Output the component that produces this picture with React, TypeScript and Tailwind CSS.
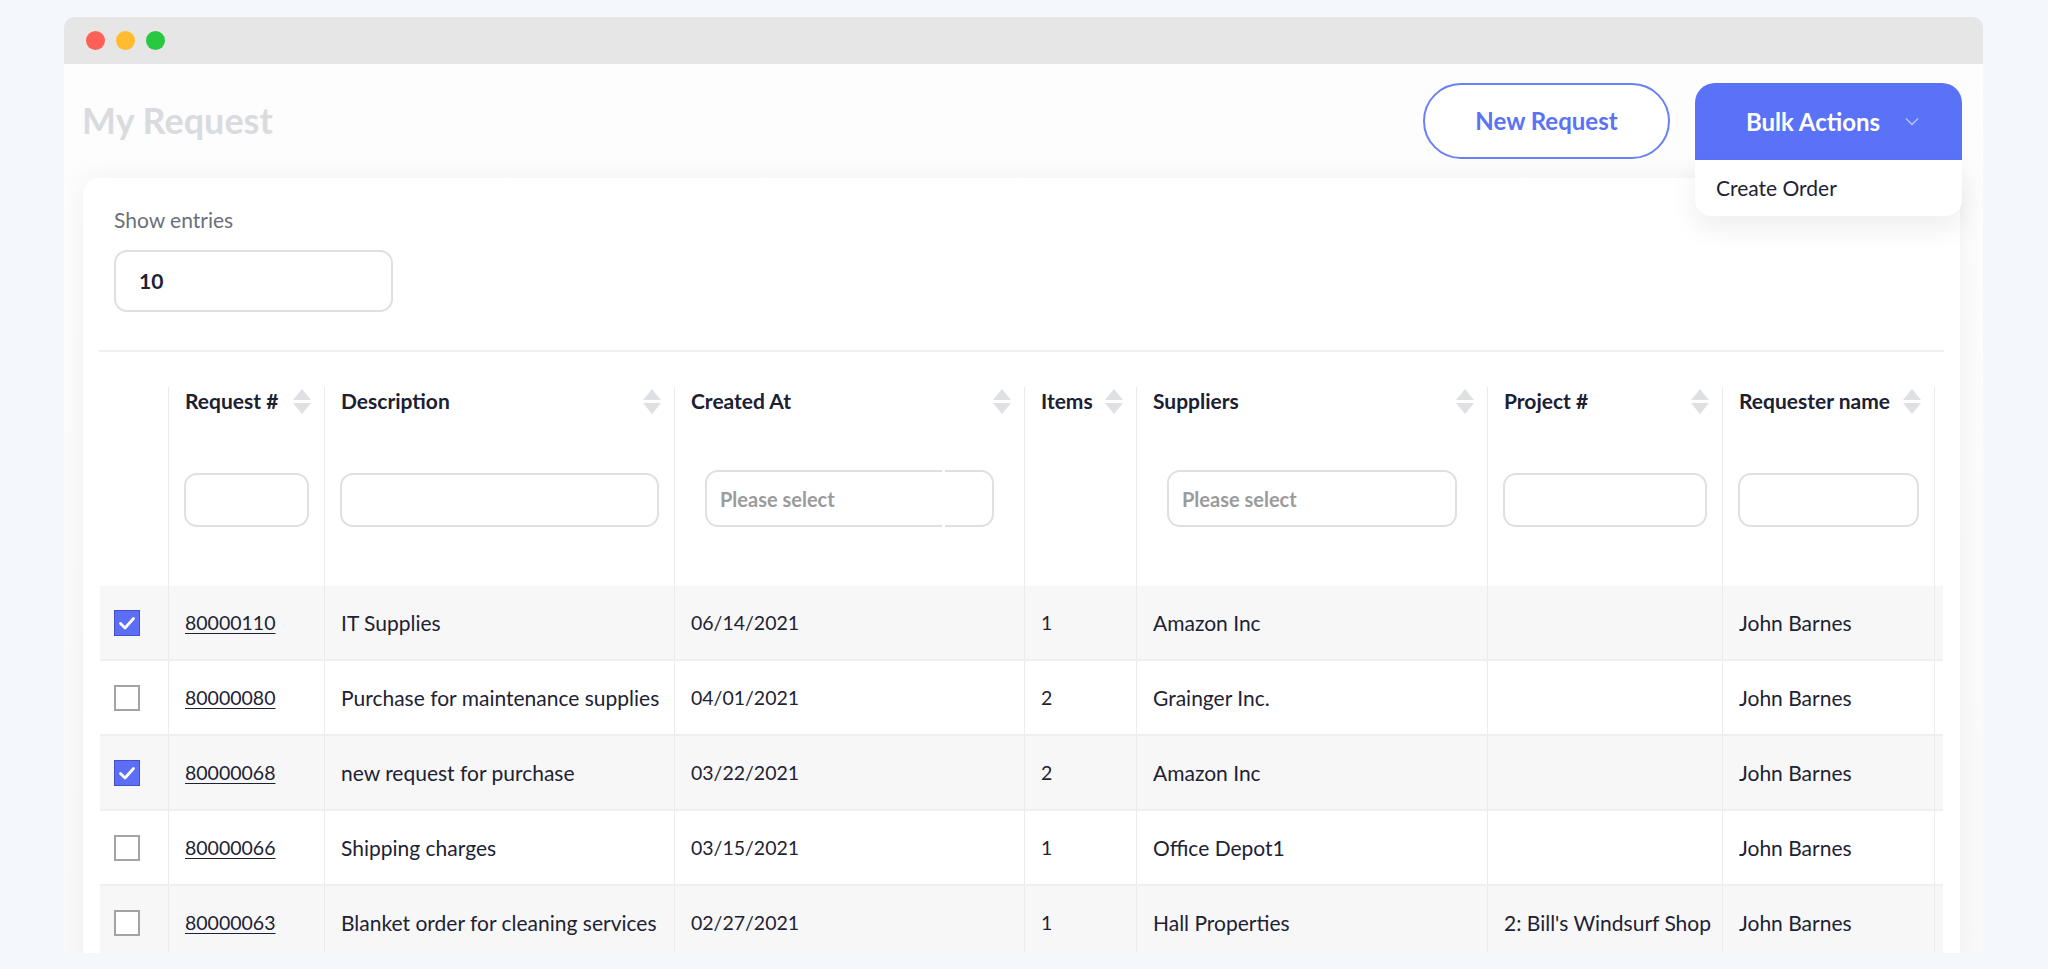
import React from "react";

const FONT = { fontFamily: "Lato, 'Open Sans', 'Noto Sans', sans-serif" };

const SortIcon = () => (
  <svg width="18" height="25" viewBox="0 0 18 25" className="shrink-0">
    <path d="M9 0 L18 11 L0 11 Z" fill="#dfe0e4" />
    <path d="M0 14 L18 14 L9 25 Z" fill="#dfe0e4" />
  </svg>
);

const Checkbox = ({ checked }: { checked: boolean }) =>
  checked ? (
    <div className="w-[26px] h-[26px] bg-[#5b6ef5] border border-[#4152c8] flex items-center justify-center">
      <svg width="20" height="20" viewBox="0 0 20 20">
        <path d="M3.5 10.5 L8 15 L16.5 5.5" fill="none" stroke="#ffffff" strokeWidth="2.8" strokeLinecap="round" strokeLinejoin="round" />
      </svg>
    </div>
  ) : (
    <div className="w-[26px] h-[26px] bg-white border-2 border-[#a3a3a6]" />
  );

type Col = { title?: string; filter?: "text" | "select" | null; gap?: boolean };

const cols: Col[] = [
  {},
  { title: "Request #", filter: "text" },
  { title: "Description", filter: "text" },
  { title: "Created At", filter: "select", gap: true },
  { title: "Items", filter: null },
  { title: "Suppliers", filter: "select" },
  { title: "Project #", filter: "text" },
  { title: "Requester name", filter: "text" },
  {},
];

const rows = [
  { c: true, id: "80000110", d: "IT Supplies", at: "06/14/2021", n: "1", s: "Amazon Inc", p: "", r: "John Barnes" },
  { c: false, id: "80000080", d: "Purchase for maintenance supplies", at: "04/01/2021", n: "2", s: "Grainger Inc.", p: "", r: "John Barnes" },
  { c: true, id: "80000068", d: "new request for purchase", at: "03/22/2021", n: "2", s: "Amazon Inc", p: "", r: "John Barnes" },
  { c: false, id: "80000066", d: "Shipping charges", at: "03/15/2021", n: "1", s: "Office Depot1", p: "", r: "John Barnes" },
  { c: false, id: "80000063", d: "Blanket order for cleaning services", at: "02/27/2021", n: "1", s: "Hall Properties", p: "2: Bill's Windsurf Shop", r: "John Barnes" },
];

const GRID = "grid grid-cols-[68px_156px_350px_350px_112px_351px_235px_212px_9px]";

export default function App() {
  return (
    <div className="min-h-screen w-[2048px] bg-[#f4f7fc] pt-[17px]" style={FONT}>
      <div className="ml-[64px] w-[1919px] h-[936px] overflow-hidden rounded-t-[10px] bg-[#fbfbfb] flex flex-col">
        {/* title bar */}
        <div className="h-[47px] shrink-0 bg-[#e6e6e6] flex items-center pl-[22px] gap-[11px]">
          <span className="w-[19px] h-[19px] rounded-full bg-[#fe5f57]" />
          <span className="w-[19px] h-[19px] rounded-full bg-[#febc2e]" />
          <span className="w-[19px] h-[19px] rounded-full bg-[#28c840]" />
        </div>

        {/* content */}
        <div className="flex-1 bg-gradient-to-b from-[#fdfdfd] to-[#f9f9f9] pl-[19px] pr-[21px]">
          <div className="pt-[19px] flex items-center justify-between">
            <h1 className="-ml-[1px] -mt-[3px] text-[36px] leading-[40px] font-bold text-[#dadbdf]">My Request</h1>
            <div className="flex items-start gap-[25px]">
              <button className="w-[247px] h-[76px] rounded-full border-2 border-[#6a80f6] bg-white text-[#5a72f7] text-[24px] font-bold">
                New Request
              </button>
              <div className="relative">
                <button className="w-[267px] h-[77px] rounded-t-[20px] bg-[#5a72f7] text-white text-[24px] font-bold flex items-center justify-center gap-[25px] pl-[8px]">
                  <span>Bulk Actions</span>
                  <svg width="14" height="9" viewBox="0 0 14 9">
                    <path d="M1 1.5 L7 7.5 L13 1.5" fill="none" stroke="#b9c3fb" strokeWidth="1.5" />
                  </svg>
                </button>
                <div className="absolute left-0 top-[77px] z-10 w-[267px] h-[56px] bg-white rounded-b-[16px] shadow-[0_12px_28px_rgba(0,0,0,0.07)] flex items-center pl-[21px]">
                  <span className="text-[21px] text-[#1d2234]">Create Order</span>
                </div>
              </div>
            </div>
          </div>

          {/* card */}
          <div className="mt-[18px] w-[1877px] bg-white rounded-t-[16px] shadow-[0_0_24px_rgba(0,0,0,0.05)]">
            <div className="px-[31px] pt-[30px]">
              <div className="text-[21px] leading-[24px] text-[#6b6f7b]">Show entries</div>
              <div className="mt-[18px] w-[279px] h-[62px] rounded-[13px] border-2 border-[#dedfe3] flex items-center pl-[23px] text-[21px] font-bold text-[#1d2234]">
                10
              </div>
            </div>
            <div className="mt-[38px] mx-[16px] h-[2px] bg-[#efeff1]" />

            <div className="mt-[35px] mx-[17px]">
              {/* header */}
              <div className={GRID}>
                {cols.map((c, i) => (
                  <div key={i} className={`h-[199px] ${i > 0 ? "border-l border-[#ebebed]" : ""}`}>
                    {c.title && (
                      <div className="flex flex-col">
                        <div className="pt-[1px] h-[27px] pl-[16px] pr-[13px] flex items-center justify-between">
                          <span className="text-[21px] leading-[26px] font-bold text-[#1b2033] whitespace-nowrap">{c.title}</span>
                          <SortIcon />
                        </div>
                        {c.filter === "text" && (
                          <div className="mt-[59px] mx-[15px] h-[54px] rounded-[13px] border-2 border-[#dfe0e4] bg-white" />
                        )}
                        {c.filter === "select" && (
                          <div className="relative mt-[56px] mx-[30px] h-[57px] rounded-[13px] border-2 border-[#dfe0e4] bg-white flex items-center pl-[13px]">
                            <span className="text-[20px] font-bold text-[#9b9b9b]">Please select</span>
                            {c.gap && <span className="absolute top-[-2px] bottom-[-2px] left-[235px] w-[3px] bg-white" />}
                          </div>
                        )}
                      </div>
                    )}
                  </div>
                ))}
              </div>

              {/* body */}
              {rows.map((r, ri) => {
                const cells = [r.id, r.d, r.at, r.n, r.s, r.p, r.r];
                return (
                  <div key={ri} className={`${GRID} h-[75px] border-b-2 border-[#efeff1] ${ri % 2 === 0 ? "bg-[#f7f7f7]" : "bg-white"}`}>
                    <div className="flex items-center pl-[14px]">
                      <Checkbox checked={r.c} />
                    </div>
                    {cells.map((t, ci) => (
                      <div key={ci} className="border-l border-[#ebebed] flex items-center pl-[16px] whitespace-nowrap overflow-hidden">
                        {ci === 0 ? (
                          <span className="text-[19.5px] text-[#1d2234] underline underline-offset-[3px]">{t}</span>
                        ) : ci === 2 || ci === 3 ? (
                          <span className="text-[19.5px] text-[#1d2234]">{t}</span>
                        ) : (
                          <span className="text-[21px] text-[#1d2234]">{t}</span>
                        )}
                      </div>
                    ))}
                    <div className="border-l border-[#ebebed]" />
                  </div>
                );
              })}
            </div>
          </div>
        </div>
      </div>
    </div>
  );
}
